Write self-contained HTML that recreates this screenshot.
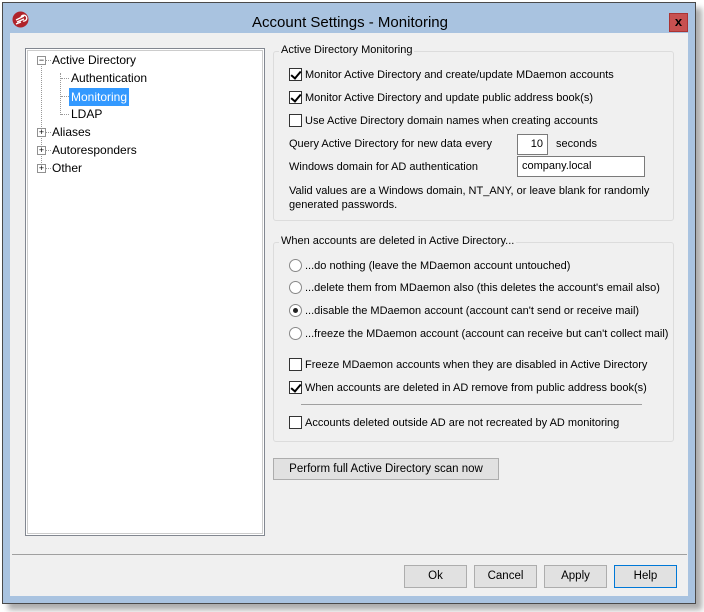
<!DOCTYPE html>
<html><head><style>
*{margin:0;padding:0;box-sizing:border-box}
body{width:704px;height:612px;background:#fff;position:relative;overflow:hidden;font-family:"Liberation Sans",sans-serif;font-size:11px;color:#000}
.abs{position:absolute}
.shadow{position:absolute;left:8px;top:8px;width:694px;height:602px;background:#8a8a8a;filter:blur(3px);opacity:.7}
.win{position:absolute;left:2px;top:2px;width:694px;height:602px;background:#a9c3e0;border:1px solid #4a4a4a}
.client{position:absolute;left:10px;top:33px;width:678px;height:563px;background:#f0f0f0}
.title{position:absolute;left:0;top:11px;width:694px;text-align:center;font-size:15px}
.close{position:absolute;left:666px;top:10px;width:19px;height:19px;background:#c75050;border:1px solid #a33;color:#000;font-weight:bold;font-size:13px;text-align:center;line-height:16px}
.tree{position:absolute;left:25px;top:48px;width:240px;height:488px;border:1px solid #828790;background:#fff}
.tree .in{position:absolute;left:1px;top:1px;right:1px;bottom:1px;border:1px solid #ccc}
.ti{position:absolute;font-size:12px;white-space:nowrap}
.pm{position:absolute;width:9px;height:9px;border:1px solid #919191;background:#fff;font-size:9px;line-height:7px;text-align:center;color:#000}
.dv{position:absolute;border-left:1px dotted #999}
.dh{position:absolute;border-top:1px dotted #999}
.grp{position:absolute;border:1px solid #dcdcdc;border-radius:3px}
.leg{position:absolute;background:#f0f0f0;padding:0 2px;white-space:nowrap}
.cb{position:absolute;width:13px;height:13px;border:1px solid #333;background:#fff}
.cb.c::after{content:"";position:absolute;left:3px;top:0px;width:4px;height:8px;border:solid #000;border-width:0 2px 2px 0;transform:rotate(40deg)}
.rd{position:absolute;width:13px;height:13px;border:1px solid #888;border-radius:50%;background:#fff}
.rd.c::after{content:"";position:absolute;left:3px;top:3px;width:5px;height:5px;border-radius:50%;background:#222}
.t{position:absolute;white-space:nowrap}
.inp{position:absolute;border:1px solid #7a7a7a;background:#fff;padding:0 4px;line-height:19px}
.btn{position:absolute;border:1px solid #adadad;background:#e1e1e1;text-align:center;line-height:20px;font-size:11.5px}
</style></head><body>
<div class="shadow"></div>
<div class="win">
 <svg class="abs" style="left:9px;top:8px" width="17" height="17" viewBox="0 0 17 17"><circle cx="8.5" cy="8.5" r="8" fill="#b0232a"/><path d="M4 9l8-4M5 11l7-3M4 13l5-2M9 6a3 3 0 1 1 2 4" stroke="#fff" stroke-width="1.3" fill="none"/></svg>
 <div class="title">Account Settings - Monitoring</div>
 <div class="close">x</div>
</div>
<div class="client" style="left:10px;top:33px"></div>

<div class="tree"><div class="in"></div>
 <div class="dv" style="left:15px;top:14px;height:106px"></div>
 <div class="dv" style="left:34px;top:24px;height:42px"></div>
 <div class="dh" style="left:35px;top:29px;width:8px"></div>
 <div class="dh" style="left:35px;top:47px;width:8px"></div>
 <div class="dh" style="left:35px;top:65px;width:8px"></div>
 <div class="dh" style="left:17px;top:11px;width:8px"></div>
 <div class="dh" style="left:17px;top:83px;width:8px"></div>
 <div class="dh" style="left:17px;top:101px;width:8px"></div>
 <div class="dh" style="left:17px;top:119px;width:8px"></div>
 <div class="pm" style="left:11px;top:7px">−</div>
 <div class="pm" style="left:11px;top:79px">+</div>
 <div class="pm" style="left:11px;top:97px">+</div>
 <div class="pm" style="left:11px;top:115px">+</div>
 <div class="ti" style="left:26px;top:4px">Active Directory</div>
 <div class="ti" style="left:45px;top:22px">Authentication</div>
 <div class="ti" style="left:43px;top:39px;background:#3399ff;color:#fff;padding:0 2px;line-height:18px">Monitoring</div>
 <div class="ti" style="left:45px;top:58px">LDAP</div>
 <div class="ti" style="left:26px;top:76px">Aliases</div>
 <div class="ti" style="left:26px;top:94px">Autoresponders</div>
 <div class="ti" style="left:26px;top:112px">Other</div>
</div>

<div class="grp" style="left:273px;top:51px;width:401px;height:170px"></div>
<div class="leg" style="left:279px;top:44px">Active Directory Monitoring</div>
<div class="cb c" style="left:289px;top:68px"></div><div class="t" style="left:305px;top:69px">Monitor Active Directory and create/update MDaemon accounts</div>
<div class="cb c" style="left:289px;top:91px"></div><div class="t" style="left:305px;top:92px">Monitor Active Directory and update public address book(s)</div>
<div class="cb" style="left:289px;top:114px"></div><div class="t" style="left:305px;top:115px">Use Active Directory domain names when creating accounts</div>
<div class="t" style="left:289px;top:138px">Query Active Directory for new data every</div>
<div class="inp" style="left:517px;top:134px;width:31px;height:21px;text-align:right">10</div>
<div class="t" style="left:556px;top:138px">seconds</div>
<div class="t" style="left:289px;top:161px">Windows domain for AD authentication</div>
<div class="inp" style="left:517px;top:156px;width:128px;height:21px">company.local</div>
<div class="t" style="left:289px;top:184px;line-height:14px">Valid values are a Windows domain, NT_ANY, or leave blank for randomly<br>generated passwords.</div>

<div class="grp" style="left:273px;top:242px;width:401px;height:200px"></div>
<div class="leg" style="left:279px;top:235px">When accounts are deleted in Active Directory...</div>
<div class="rd" style="left:289px;top:259px"></div><div class="t" style="left:305px;top:260px">...do nothing (leave the MDaemon account untouched)</div>
<div class="rd" style="left:289px;top:281px"></div><div class="t" style="left:305px;top:282px">...delete them from MDaemon also (this deletes the account's email also)</div>
<div class="rd c" style="left:289px;top:304px"></div><div class="t" style="left:305px;top:305px">...disable the MDaemon account (account can't send or receive mail)</div>
<div class="rd" style="left:289px;top:327px"></div><div class="t" style="left:305px;top:328px">...freeze the MDaemon account (account can receive but can't collect mail)</div>
<div class="cb" style="left:289px;top:358px"></div><div class="t" style="left:305px;top:359px">Freeze MDaemon accounts when they are disabled in Active Directory</div>
<div class="cb c" style="left:289px;top:381px"></div><div class="t" style="left:305px;top:382px">When accounts are deleted in AD remove from public address book(s)</div>
<div class="abs" style="left:301px;top:404px;width:341px;height:1px;background:#a0a0a0"></div>
<div class="cb" style="left:289px;top:416px"></div><div class="t" style="left:305px;top:417px">Accounts deleted outside AD are not recreated by AD monitoring</div>

<div class="btn" style="left:273px;top:458px;width:226px;height:22px">Perform full Active Directory scan now</div>

<div class="abs" style="left:12px;top:554px;width:675px;height:1px;background:#a0a0a0"></div>
<div class="btn" style="left:404px;top:565px;width:63px;height:23px">Ok</div>
<div class="btn" style="left:474px;top:565px;width:63px;height:23px">Cancel</div>
<div class="btn" style="left:544px;top:565px;width:63px;height:23px">Apply</div>
<div class="btn" style="left:614px;top:565px;width:63px;height:23px;border-color:#0078d7">Help</div>
</body></html>
